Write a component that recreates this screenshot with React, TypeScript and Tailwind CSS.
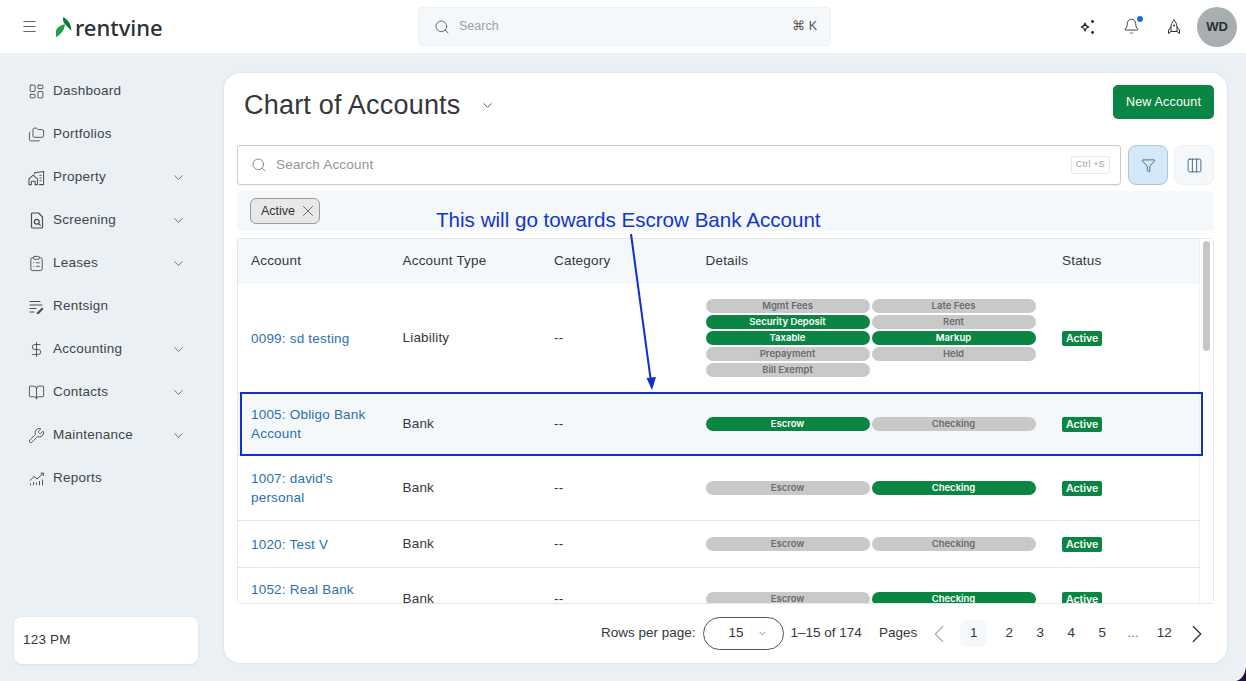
import React from "react";
import { LayoutDashboard, Folders, ClipboardList, DollarSign, BookOpen, Wrench, ChevronDown, ChevronLeft, ChevronRight, Search, X, Filter, Columns3, Bell, Menu } from "lucide-react";

const I = "size-[17px] stroke-[1.3] text-[#4a4f55]";

function PropertyIcon() {
  return (
    <svg viewBox="0 0 18 16" className="h-[16px] w-[18px]" fill="none" stroke="#4a4f55" strokeWidth="1.1" strokeLinejoin="round" strokeLinecap="round">
      <path d="M1 15V9l4.5-4L10 9v6H7.5v-3.5h-4V15z" />
      <path d="M7 3.500 V2.500 L16.500 1 V15 H12" />
      <path d="M12.500 5h1.500M12.500 8h1.500M12.500 11h1.500" />
    </svg>
  );
}
function ScreeningIcon() {
  return (
    <svg viewBox="0 0 16 17" className="h-[17px] w-[16px]" fill="none" stroke="#4a4f55" strokeWidth="1.2" strokeLinejoin="round" strokeLinecap="round">
      <path d="M3.500 1h6L13.500 5v10a1 1 0 0 1-1 1h-9a1 1 0 0 1-1-1V2a1 1 0 0 1 1-1z" />
      <circle cx="7.800" cy="9.800" r="2.400" />
      <path d="m9.600 11.600 1.700 1.700" />
    </svg>
  );
}
function RentsignIcon() {
  return (
    <svg viewBox="0 0 16 14" className="h-[14px] w-[16px]" fill="none" stroke="#4a4f55" strokeWidth="1.1" strokeLinecap="round">
      <path d="M1 1.500h10M1 5h12M1 8.500h6M1 12h4" />
      <path d="m8 12.500 5-5 1.600 1.600-5 5-2 .4z" fill="#4a4f55" stroke="none" />
    </svg>
  );
}
function ReportsIcon() {
  return (
    <svg viewBox="0 0 16 14" className="h-[14px] w-[16px]" fill="none" stroke="#4a4f55" strokeWidth="1" strokeLinecap="round" strokeLinejoin="round">
      <path d="M1 8.500 5 4.500l3 2.500 6-5.500M12 1.200h2.400v2.400" />
      <path d="M1.500 12v1M4.500 10.500V13M7.500 11v2M10.500 9.500V13M13.500 8V13" strokeDasharray="1.400 0.600" />
    </svg>
  );
}
function SparkIcon() {
  return (
    <svg viewBox="0 0 18 18" className="size-[18px]" fill="none" stroke="#222" strokeWidth="1.2" strokeLinejoin="round">
      <path d="M6 5.200c.4 2.200 1.600 3.400 3.800 3.800-2.200.4-3.400 1.600-3.800 3.800-.4-2.200-1.600-3.400-3.800-3.800 2.200-.4 3.400-1.600 3.800-3.800z" />
      <circle cx="13.500" cy="3.500" r="1.400" fill="#222" stroke="none" />
      <circle cx="13.500" cy="14.500" r="1.400" fill="#222" stroke="none" />
    </svg>
  );
}
function RocketIcon() {
  return (
    <svg viewBox="0 0 14 16" className="h-[16px] w-[14px]" fill="none" stroke="#333" strokeWidth="1" strokeLinejoin="round" strokeLinecap="round">
      <path d="M7 1C5 3 4 5.500 4 8v4.500h6V8C10 5.500 9 3 7 1z" />
      <path d="M4 8 1.500 11v3.500L4 12.500M10 8l2.500 3v3.500L10 12.500" />
      <circle cx="7" cy="6.500" r="1" fill="#333" stroke="none" />
    </svg>
  );
}
function Logo() {
  return (
    <svg viewBox="0 0 16 20" className="h-[20px] w-[16px] shrink-0">
      <path d="M7.200 0 C6.600 3 7.200 5.500 9.500 7.800 L15.300 13.800 C15.600 8 12.800 3.200 7.200 0z" fill="#0a7c3e" />
      <path d="M0 20 L0 13.500 C1.300 10.500 4.500 8 8.800 7.300 C9 12.500 5 17.500 0 20z" fill="#1f9e4a" />
    </svg>
  );
}

const nav: [string, React.ReactNode, boolean][] = [
  ["Dashboard", <LayoutDashboard className={I} />, false],
  ["Portfolios", <Folders className={I} />, false],
  ["Property", <PropertyIcon />, true],
  ["Screening", <ScreeningIcon />, true],
  ["Leases", <ClipboardList className={I} />, true],
  ["Rentsign", <RentsignIcon />, false],
  ["Accounting", <DollarSign className={I} />, true],
  ["Contacts", <BookOpen className={I} />, true],
  ["Maintenance", <Wrench className={I} />, true],
  ["Reports", <ReportsIcon />, false],
];

const inter = { fontFamily: "Inter, sans-serif" };

function Pill({ t, on }: { t: string; on?: boolean }) {
  return (
    <div style={inter} className={"flex h-[14px] items-center justify-center rounded-full text-[9.5px] font-semibold leading-none " + (on ? "bg-[#0a8543] text-white" : "bg-[#c9c9c9] text-[#6b6b6b]")}>
      {t}
    </div>
  );
}
function Badge() {
  return <span style={inter} className="inline-block rounded-[2px] bg-[#0a8543] px-[4px] py-[1.5px] text-[10.5px] font-semibold leading-[12px] text-white">Active</span>;
}

const cols = "grid grid-cols-[151.5px_151.5px_151.5px_356.5px_1fr] items-center pl-[13px] tracking-[0.2px]";

function Row({ a, t, pills, h, hl }: { a: string; t: string; pills: [string, boolean][]; h: string; hl?: boolean }) {
  return (
    <div className={cols + " border-b border-[#e3e7ea] text-[13.5px] text-[#33373b] " + h + (hl ? " bg-[#f5f8fb]" : " bg-white")}>
      <div className="w-[118px] leading-[19px] text-[#2c6fb0]">{a}</div>
      <div>{t}</div>
      <div>--</div>
      <div className="grid w-[330px] grid-cols-2 gap-x-[2px] gap-y-[2px] tracking-normal">
        {pills.map(([p, on]) => <Pill key={p} t={p} on={on} />)}
      </div>
      <div className="tracking-normal"><Badge /></div>
    </div>
  );
}

export default function App() {
  return (
    <div className="relative flex h-[681px] w-[1246px] flex-col overflow-hidden bg-[#ebf0f4] text-[#33373b]" style={{ fontFamily: "'Liberation Sans', Arial, sans-serif" }}>
      <header className="flex h-[53px] shrink-0 items-center bg-white">
        <Menu className="ml-[21px] size-[17px] stroke-[1.2] text-[#444]" />
        <div className="ml-[18px] flex w-[99px] items-center">
          <Logo />
          <span className="ml-[3px] text-[22px] font-medium leading-none text-[#2a3036]" style={{ fontFamily: "'Noto Sans', sans-serif" }}>rentvine</span>
        </div>
        <div className="ml-[263px] flex h-[39px] w-[413px] items-center rounded-[4px] border border-[#eef1f4] bg-[#f5f8fb] pl-[15px] pr-[13px] text-[12.5px]">
          <Search className="size-[16px] stroke-[1.3] text-[#555]" />
          <span className="ml-[9px] text-[#9aa0a6]">Search</span>
          <span className="ml-auto text-[#555]">⌘ K</span>
        </div>
        <div className="ml-auto flex items-center">
          <SparkIcon />
          <div className="relative ml-[26px]">
            <Bell className="size-[17px] stroke-[1.2] text-[#222]" />
            <span className="absolute -right-[3px] -top-[2px] size-[6px] rounded-full bg-[#1a6fd0]" />
          </div>
          <div className="ml-[27px]"><RocketIcon /></div>
          <div className="ml-[16px] mr-[9px] flex size-[40px] items-center justify-center rounded-full bg-[#a9aeb0] text-[13px] font-bold text-[#2c2f31]">WD</div>
        </div>
      </header>
      <div className="flex min-h-0 flex-1">
        <aside className="flex w-[224px] shrink-0 flex-col pb-[17px] pt-[17px]">
          <nav className="flex-1">
            {nav.map(([n, ic, ch]) => (
              <div key={n} className="flex h-[43px] items-center pl-[28px] pr-[38px] text-[13.5px] tracking-[0.25px] text-[#3f444a]">
                <span className="flex w-[17px] justify-center">{ic}</span>
                <span className="ml-[8px]">{n}</span>
                {ch && <ChevronDown className="ml-auto size-[15px] stroke-[1.3] text-[#555]" />}
              </div>
            ))}
          </nav>
          <div className="ml-[14px] flex h-[47px] w-[184px] items-center rounded-[8px] bg-white pl-[9px] text-[13.5px] tracking-[0.2px] shadow-[0_1px_3px_rgba(0,0,0,0.08)]">123 PM</div>
        </aside>
        <main className="min-w-0 flex-1 pb-[18px] pr-[19px] pt-[20px]">
          <div className="flex h-full flex-col rounded-[16px] bg-white px-[13px] shadow-[0_0_3px_rgba(0,0,0,0.1)]">
            <div className="flex h-[72px] shrink-0 items-start pl-[7px] pt-[12px]">
              <h1 className="mt-[5px] text-[27px] font-normal leading-[30px] tracking-[0.2px] text-[#33373b]">Chart of Accounts</h1>
              <ChevronDown className="ml-[19px] mt-[13px] size-[15px] stroke-[1.4] text-[#444]" />
              <button className="ml-auto h-[34px] w-[101px] rounded-[5px] bg-[#0a8543] text-[12.5px] font-medium tracking-[0.2px] text-white">New Account</button>
            </div>
            <div className="flex shrink-0 items-center">
              <div className="flex h-[40px] w-[884px] items-center rounded-[3px] border border-[#c9cdd1] pl-[13px] pr-[10px] text-[13.5px] tracking-[0.2px] text-[#8f959b] shadow-[0_1px_1px_rgba(0,0,0,0.06)]">
                <Search className="size-[16px] stroke-[1.3] text-[#777]" />
                <span className="ml-[9px]">Search Account</span>
                <span className="ml-auto rounded-[3px] border border-[#e5e7e9] px-[4px] py-[1px] text-[9px] text-[#9a9fa4]">Ctrl +S</span>
              </div>
              <div className="ml-[7px] flex size-[40px] items-center justify-center rounded-[8px] border border-[#a9c8df] bg-[#d4e8f7]">
                <Filter className="size-[15px] stroke-[1.3] text-[#2b5580]" />
              </div>
              <div className="ml-[6px] flex size-[40px] items-center justify-center rounded-[8px] border border-[#eef1f4] bg-[#f5f8fb]">
                <Columns3 className="size-[17px] stroke-[1.2] text-[#2b5580]" />
              </div>
            </div>
            <div className="mt-[6px] flex h-[40px] shrink-0 items-start rounded-[4px] bg-[#f5f8fb] pl-[13px] pt-[7px]">
              <div className="flex h-[26px] w-[70px] items-center rounded-[6px] border border-[#9b9b9b] bg-[#e8e8e8] pl-[10px] text-[12.5px] text-[#333]">
                Active
                <X className="ml-[4px] size-[18px] stroke-[1] text-[#444]" />
              </div>
            </div>
            <div className="relative mt-[7px] h-[366px] shrink-0 overflow-hidden rounded-[4px] border border-[#e3e7ea]">
              <div className={cols + " h-[45px] bg-[#f5f8fb] text-[13.5px] text-[#33373b]"}>
                <div>Account</div><div>Account Type</div><div>Category</div><div>Details</div><div>Status</div>
              </div>
              <Row h="h-[109px]" a="0099: sd testing" t="Liability" pills={[["Mgmt Fees", false], ["Late Fees", false], ["Security Deposit", true], ["Rent", false], ["Taxable", true], ["Markup", true], ["Prepayment", false], ["Held", false], ["Bill Exempt", false]]} />
              <Row h="h-[63px]" hl a="1005: Obligo Bank Account" t="Bank" pills={[["Escrow", true], ["Checking", false]]} />
              <Row h="h-[65px]" a="1007: david's personal" t="Bank" pills={[["Escrow", false], ["Checking", true]]} />
              <Row h="h-[47px]" a="1020: Test V" t="Bank" pills={[["Escrow", false], ["Checking", false]]} />
              <Row h="h-[63px]" a="1052: Real Bank Account" t="Bank" pills={[["Escrow", false], ["Checking", true]]} />
              <div className="absolute bottom-0 right-0 top-0 w-[14px] border-l border-[#eef0f2] bg-white">
                <div className="ml-[3px] mt-[2px] h-[110px] w-[7px] rounded-full bg-[#c4c6c8]" />
              </div>
            </div>
            <div className="flex min-h-0 flex-1 items-center pl-[364px] text-[13.5px] text-[#33373b]">
              <span>Rows per page:</span>
              <div className="ml-[7px] flex h-[33px] w-[81px] items-center rounded-full border border-[#555] pl-[25px]">
                <span>15</span>
                <ChevronDown className="ml-[13px] size-[11px] text-[#888]" />
              </div>
              <span className="ml-[7px]">1–15 of 174</span>
              <span className="ml-[17px]">Pages</span>
              <ChevronLeft className="-mx-[9px] ml-[7px] size-[30px] stroke-[0.9] text-[#aaa]" />
              <div className="ml-[15px] flex size-[27px] items-center justify-center rounded-[6px] bg-[#f5f8fb]">1</div>
              <span className="ml-[13px] w-[18px] text-center">2</span>
              <span className="ml-[13px] w-[18px] text-center">3</span>
              <span className="ml-[13px] w-[18px] text-center">4</span>
              <span className="ml-[13px] w-[18px] text-center">5</span>
              <span className="ml-[13px] w-[18px] text-center text-[#777]">...</span>
              <span className="ml-[13px] w-[18px] text-center">12</span>
              <ChevronRight className="ml-[9px] size-[30px] stroke-[1] text-[#333]" />
            </div>
          </div>
        </main>
      </div>
      {/* annotation overlay */}
      <div className="pointer-events-none absolute left-[436px] top-[208px] text-[20.6px] leading-[24px] text-[#1236c8]">This will go towards Escrow Bank Account</div>
      <svg className="pointer-events-none absolute left-[620px] top-[230px] h-[165px] w-[45px]" viewBox="0 0 45 165" fill="none">
        <path d="M11 4 L31 152" stroke="#0f2fd0" strokeWidth="2" />
        <path d="M32 160 L26.500 148 L36 147z" fill="#0f2fd0" />
      </svg>
      <div className="pointer-events-none absolute left-[240px] top-[392px] h-[64px] w-[963px] border-2 border-[#0f2fd0]" />
      <svg className="pointer-events-none absolute bottom-0 right-0 h-[14px] w-[10px]" viewBox="0 0 10 14">
        <path d="M10 0V14H0C5 13 9 8 10 0z" fill="#1d1145" />
      </svg>
    </div>
  );
}
